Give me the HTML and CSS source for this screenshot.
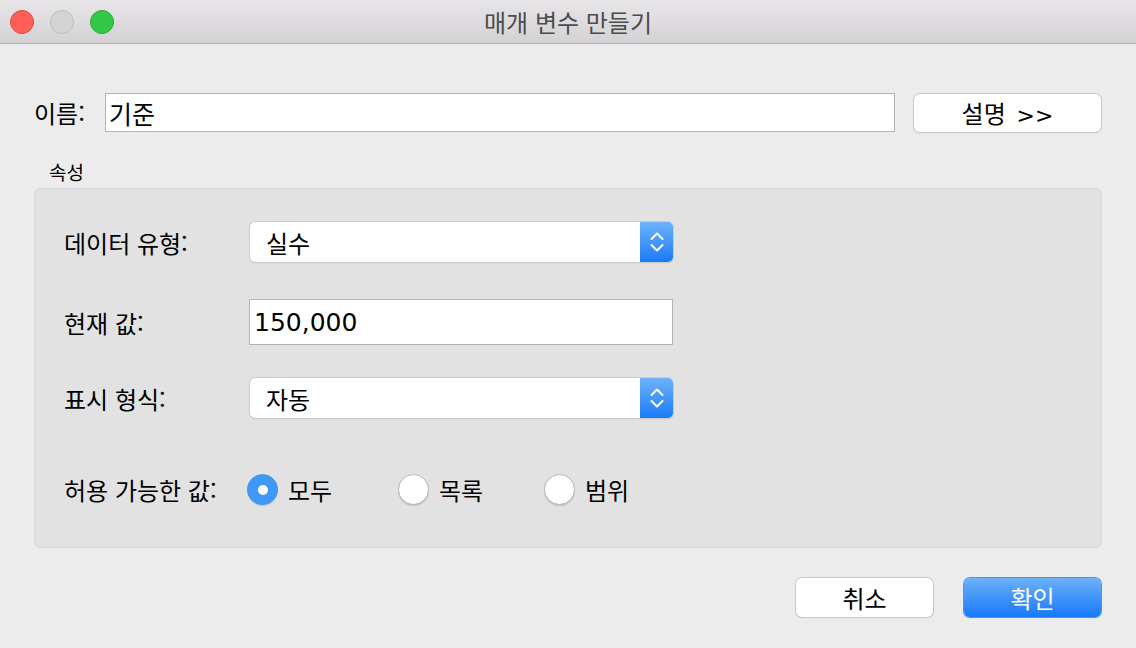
FILE: index.html
```html
<!DOCTYPE html>
<html lang="ko">
<head>
    <meta charset="UTF-8">
    <meta name="viewport" content="width=device-width, initial-scale=1.0">
    <title>매개 변수 만들기</title>
    <link rel="stylesheet" href="styles.css">
</head>
<body>
    <div class="titlebar">
        <div class="lights">
            <span class="light red"></span>
            <span class="light gray"></span>
            <span class="light green"></span>
        </div>
        <div class="title">매개 변수 만들기</div>
    </div>

    <div class="content">
        <div class="name-row">
            <label class="name-label">이름:</label>
            <div class="text-field name-field">기준</div>
            <button class="btn desc-btn">설명 <span class="arrows">&gt;&gt;</span></button>
        </div>

        <div class="section-title">속성</div>

        <div class="group">
            <div class="row row-type">
                <div class="row-label">데이터 유형:</div>
                <div class="popup">
                    <span class="popup-value">실수</span>
                    <span class="stepper">
                        <svg width="16" height="24" viewBox="0 0 16 24">
                            <path d="M2.5 9 L8 3.5 L13.5 9" fill="none" stroke="#fff" stroke-width="2" stroke-linecap="round" stroke-linejoin="round"/>
                            <path d="M2.5 15 L8 20.5 L13.5 15" fill="none" stroke="#fff" stroke-width="2" stroke-linecap="round" stroke-linejoin="round"/>
                        </svg>
                    </span>
                </div>
            </div>

            <div class="row row-value">
                <div class="row-label">현재 값:</div>
                <div class="text-field value-field">150,000</div>
            </div>

            <div class="row row-format">
                <div class="row-label">표시 형식:</div>
                <div class="popup">
                    <span class="popup-value">자동</span>
                    <span class="stepper">
                        <svg width="16" height="24" viewBox="0 0 16 24">
                            <path d="M2.5 9 L8 3.5 L13.5 9" fill="none" stroke="#fff" stroke-width="2" stroke-linecap="round" stroke-linejoin="round"/>
                            <path d="M2.5 15 L8 20.5 L13.5 15" fill="none" stroke="#fff" stroke-width="2" stroke-linecap="round" stroke-linejoin="round"/>
                        </svg>
                    </span>
                </div>
            </div>

            <div class="row row-allowed">
                <div class="row-label">허용 가능한 값:</div>
                <div class="radios">
                    <div class="radio-item all">
                        <span class="radio checked"></span>
                        <span>모두</span>
                    </div>
                    <div class="radio-item list">
                        <span class="radio"></span>
                        <span>목록</span>
                    </div>
                    <div class="radio-item range">
                        <span class="radio"></span>
                        <span>범위</span>
                    </div>
                </div>
            </div>
        </div>

        <div class="actions">
            <button class="btn cancel-btn">취소</button>
            <button class="btn ok-btn">확인</button>
        </div>
    </div>
</body>
</html>
```

FILE: styles.css
```css
body {
    margin: 0;
    padding: 0;
    width: 1136px;
    height: 648px;
    overflow: hidden;
    background-color: #ececec;
    font-family: "Noto Sans CJK KR", "Noto Sans", sans-serif;
    color: #000;
}

/* title bar */
.titlebar {
    position: relative;
    height: 43px;
    background: linear-gradient(#e8e6e8, #d3d1d3);
    border-bottom: 1px solid #b1afb1;
    display: flex;
    align-items: center;
    justify-content: center;
}

.lights {
    position: absolute;
    left: 10px;
    top: 10px;
    display: flex;
    gap: 16px;
}

.light {
    width: 24px;
    height: 24px;
    border-radius: 50%;
    box-sizing: border-box;
}

.red {
    background-color: #fe5f57;
    border: 1px solid #e2463f;
}

.gray {
    background-color: #d5d4d5;
    border: 1px solid #bdbcbd;
}

.green {
    background-color: #33c748;
    border: 1px solid #27aa35;
}

.title {
    font-size: 24px;
    color: #4c4c4c;
}

/* content */
.content {
    padding: 49px 34px 0 34px;
}

.name-row {
    display: flex;
    align-items: center;
}

.name-label {
    font-size: 24px;
    width: 71px;
}

.text-field {
    background-color: #fff;
    border: 1px solid #b3b3b3;
    box-sizing: border-box;
    font-size: 25px;
    display: flex;
    align-items: center;
    padding-left: 3px;
}

.name-field {
    width: 790px;
    height: 39px;
}

.btn {
    font-family: inherit;
    font-size: 24px;
    border: none;
    border-radius: 6px;
    background-color: #fff;
    box-shadow: 0 0 0 1px #c8c8c8, 0 1px 1px rgba(0, 0, 0, 0.25);
    color: #000;
    padding: 0;
}

.desc-btn {
    margin-left: 19px;
    width: 187px;
    height: 38px;
}

.arrows {
    font-family: "DejaVu Sans", sans-serif;
    font-size: 22px;
    margin-left: 4px;
}

.section-title {
    font-size: 19px;
    margin: 23px 0 0 15px;
    height: 33px;
    line-height: 33px;
}

.group {
    background-color: #e2e2e2;
    border: 1px solid #d9d9d9;
    border-radius: 6px;
    padding: 0 29px;
    box-sizing: border-box;
    height: 360px;
}

.row {
    display: flex;
    align-items: center;
}

.row-label {
    width: 185px;
    font-size: 24px;
}

.row-type {
    margin-top: 33px;
}

.row-value {
    margin-top: 37px;
}

.row-format {
    margin-top: 33px;
}

.row-allowed {
    margin-top: 54px;
}

.popup {
    width: 423px;
    height: 40px;
    margin-left: 1px;
    background-color: #fff;
    border-radius: 5px;
    box-shadow: 0 0 0 1px #cbcbcb, 0 1px 1px rgba(0, 0, 0, 0.25);
    display: flex;
    align-items: center;
    justify-content: space-between;
    overflow: hidden;
}

.popup-value {
    font-size: 24px;
    padding-left: 16px;
}

.stepper {
    width: 33px;
    height: 40px;
    background: linear-gradient(#6db3fa, #1a7bf7);
    display: flex;
    align-items: center;
    justify-content: center;
}

.value-field {
    width: 424px;
    height: 46px;
    padding-left: 4px;
    font-family: "DejaVu Sans", sans-serif;
    font-size: 25px;
}

.radios {
    display: flex;
    margin-left: -2px;
}

.radio-item {
    display: flex;
    align-items: center;
    font-size: 24px;
    gap: 10px;
}

.radio-item.all {
    width: 151px;
}

.radio-item.list {
    width: 146px;
}

.radio {
    width: 31px;
    height: 31px;
    border-radius: 50%;
    box-sizing: border-box;
    background-color: #fff;
    border: 1px solid #b9b9b9;
    box-shadow: 0 1px 1px rgba(0, 0, 0, 0.15);
    display: flex;
    align-items: center;
    justify-content: center;
}

.radio.checked {
    background-color: #3f97f6;
    border-color: #3f97f6;
}

.radio.checked::after {
    content: "";
    width: 10px;
    height: 10px;
    border-radius: 50%;
    background-color: #fff;
}

.actions {
    display: flex;
    justify-content: flex-end;
    gap: 31px;
    margin-top: 30px;
    padding-right: 1px;
}

.cancel-btn,
.ok-btn {
    width: 137px;
    height: 39px;
}

.ok-btn {
    background: linear-gradient(#6cb1f9, #1779f8);
    color: #fff;
    box-shadow: 0 0 0 1px #4a95f0, 0 1px 1px rgba(0, 0, 0, 0.2);
}
```
